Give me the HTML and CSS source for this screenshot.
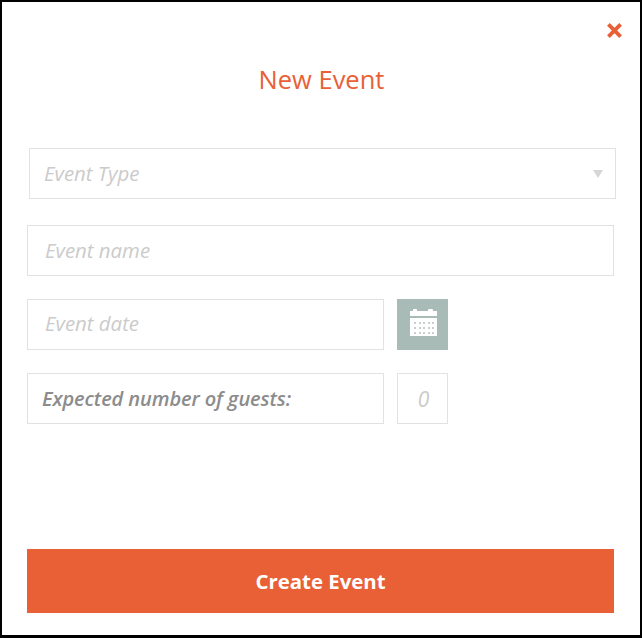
FILE: index.html
```html
<!DOCTYPE html>
<html>

<head>
    <meta charset="UTF-8">
    <meta name="viewport" content="width=device-width, initial-scale=1.0">
    <title>New Event</title>
    <link rel="stylesheet" href="styles.css">
</head>

<body>
    <div class="event-modal">
        <div class="close-row">
            <svg class="close-icon" width="15" height="15" viewBox="0 0 16 16">
                <path d="M1.5 1.5L14.5 14.5M14.5 1.5L1.5 14.5" stroke="#e96036" stroke-width="4" fill="none"></path>
            </svg>
        </div>
        <h1>New Event</h1>
        <div class="field field-select">
            <span class="placeholder">Event Type</span>
            <span class="select-arrow"></span>
        </div>
        <div class="field field-name">
            <span class="placeholder">Event name</span>
        </div>
        <div class="row row-date">
            <div class="field field-half field-date">
                <span class="placeholder">Event date</span>
            </div>
            <div class="calendar-button">
                <svg width="27" height="27" viewBox="0 0 27 27">
                    <path d="M0 2H3V1a1 1 0 0 1 1-1H6a1 1 0 0 1 1 1V2H18V1a1 1 0 0 1 1-1H22a1 1 0 0 1 1 1V2H27V7H0Z" fill="#fff"></path>
                    <rect x="0" y="9" width="27" height="18" fill="#fff"></rect>
                    <g fill="#c5d1ce">
                        <rect x="4" y="13" width="2" height="2"></rect>
                        <rect x="9" y="13" width="2" height="2"></rect>
                        <rect x="13" y="13" width="2" height="2"></rect>
                        <rect x="18" y="13" width="2" height="2"></rect>
                        <rect x="22" y="13" width="2" height="2"></rect>
                        <rect x="4" y="18" width="2" height="2"></rect>
                        <rect x="9" y="18" width="2" height="2"></rect>
                        <rect x="13" y="18" width="2" height="2"></rect>
                        <rect x="18" y="18" width="2" height="2"></rect>
                        <rect x="22" y="18" width="2" height="2"></rect>
                        <rect x="4" y="23" width="2" height="2"></rect>
                        <rect x="9" y="23" width="2" height="2"></rect>
                        <rect x="13" y="23" width="2" height="2"></rect>
                        <rect x="18" y="23" width="2" height="2"></rect>
                        <rect x="22" y="23" width="2" height="2"></rect>
                    </g>
                </svg>
            </div>
        </div>
        <div class="row row-guests">
            <div class="field field-half field-label">Expected number of guests:</div>
            <div class="field field-count">0</div>
        </div>
        <button class="create-button">Create Event</button>
    </div>
</body>

</html>
```

FILE: styles.css
```css
html, body {
    margin: 0;
    padding: 0;
}

body {
    font-family: "Open Sans", sans-serif;
    background-color: #fff;
}

.event-modal {
    box-sizing: border-box;
    width: 642px;
    height: 638px;
    padding: 0 26px 0 25px;
    background-color: #fff;
    border: 2px solid #000;
    border-bottom-width: 3px;
}

.close-row {
    display: flex;
    justify-content: flex-end;
    padding-top: 21px;
    margin-right: -8px;
    height: 15px;
}

h1 {
    margin: 19px 0 0;
    padding-left: 2px;
    font-size: 25.5px;
    line-height: 44px;
    font-weight: 400;
    text-align: center;
    color: #e96036;
}

.field {
    box-sizing: border-box;
    display: flex;
    align-items: center;
    height: 51px;
    border: 1px solid #e2e2e2;
    background-color: #fff;
}

.placeholder {
    font-size: 20.4px;
    font-style: italic;
    color: #cbcbcb;
}

.field-select {
    justify-content: space-between;
    margin: 47px -2px 0 2px;
    padding: 0 12px 2px 14px;
}

.select-arrow {
    width: 0;
    height: 0;
    margin-top: 2px;
    border-left: 5px solid transparent;
    border-right: 5px solid transparent;
    border-top: 8px solid #d6d6d6;
}

.field-name {
    margin-top: 26px;
    padding-left: 17px;
    padding-bottom: 2px;
}

.row {
    display: flex;
    gap: 13px;
}

.row-date {
    margin-top: 23px;
}

.row-guests {
    margin-top: 23px;
}

.field-half {
    width: 357px;
    padding-left: 17px;
}

.field-date {
    padding-bottom: 4px;
}

.field-label {
    padding-left: 14px;
    font-size: 20px;
    font-style: italic;
    font-weight: 600;
    letter-spacing: -0.1px;
    color: #8c8c8c;
}

.calendar-button {
    box-sizing: border-box;
    display: flex;
    align-items: center;
    justify-content: center;
    width: 51px;
    height: 51px;
    padding: 0 0 4px 2px;
    background-color: #a9bbb7;
}

.field-count {
    justify-content: center;
    width: 51px;
    padding-left: 2px;
    font-size: 21px;
    font-style: italic;
    color: #cbcbcb;
}

.create-button {
    display: block;
    width: 587px;
    height: 64px;
    margin-top: 125px;
    padding: 0;
    border: none;
    background-color: #e96036;
    color: #fff;
    font-family: "Open Sans", sans-serif;
    font-size: 20.4px;
    font-weight: 700;
}
```
